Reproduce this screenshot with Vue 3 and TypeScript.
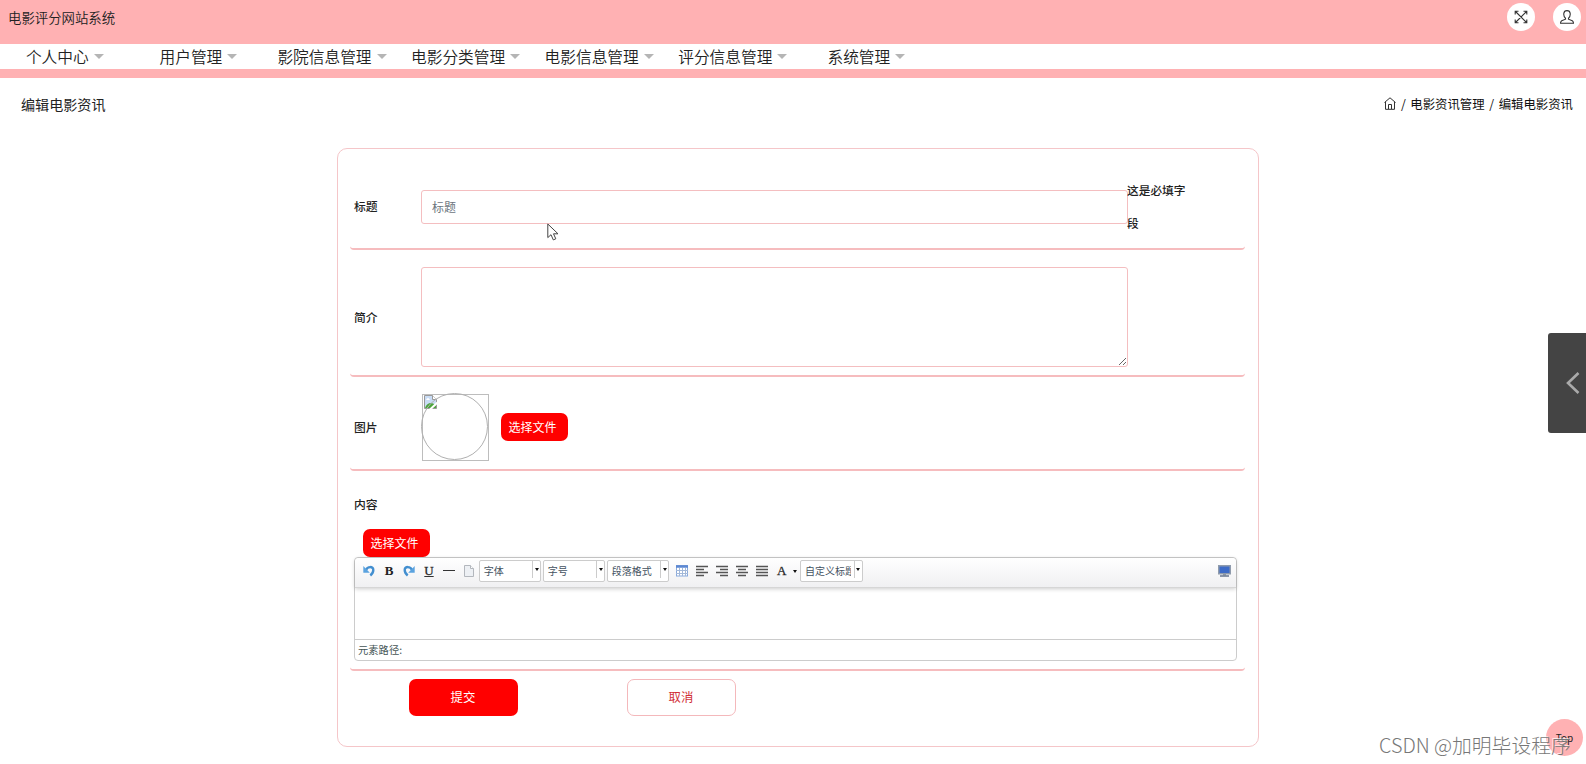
<script setup lang="ts">
interface Combo { label: string; }
const menus: string[] = ['个人中心', '用户管理', '影院信息管理', '电影分类管理', '电影信息管理', '评分信息管理', '系统管理']
const combos: Combo[] = [{ label: '字体' }, { label: '字号' }, { label: '段落格式' }]
const aligns: string[] = [
  'M0 1.5h12M0 4.5h8M0 7.5h12M0 10.5h8',
  'M0 1.5h12M4 4.5h8M0 7.5h12M4 10.5h8',
  'M0 1.5h12M2 4.5h8M0 7.5h12M2 10.5h8',
  'M0 1.5h12M0 4.5h12M0 7.5h12M0 10.5h12',
]
</script>

<template>
  <div class="page">
    <header class="header">
      <span class="brand">电影评分网站系统</span>
      <div class="tools">
        <button class="round">
          <svg width="14" height="14" viewBox="0 0 14 14"><path d="M1.5 1.5l11 11M12.5 1.5l-11 11M1.2 4.5V1.2h3.3M9.5 1.2h3.3v3.3M12.8 9.5v3.3H9.5M4.5 12.8H1.2V9.5" /></svg>
        </button>
        <button class="round">
          <svg width="14" height="14" viewBox="0 0 14 14"><path d="M5.5 8.2C3.9 7 3.6 5.4 3.8 3.5 4 1.6 5.200.6 7 .6s3 1 3.200 2.900C10.400 5.400 10.100 7 8.500 8.200v1L12.300 10.700q1 .5 1.200 2.500H.5q.2-2 1.200-2.500L5.500 9.200z" /></svg>
        </button>
      </div>
    </header>
    <nav class="nav">
      <a v-for="m in menus" :key="m" class="menu"><span>{{ m }}</span><i class="caret"></i></a>
    </nav>
    <div class="strip"></div>

    <div class="heading">
      <h1>编辑电影资讯</h1>
      <div class="crumbs">
        <svg width="12" height="13" viewBox="0 0 12 13"><path d="M.5 5.500L6 .8l5.500 4.700M1.500 5v7.300h9V5M4.500 12V7.500h3V12" /></svg>
        <span class="slash">/</span><span>电影资讯管理</span><span class="slash">/</span><span>编辑电影资讯</span>
      </div>
    </div>

    <main class="card">
      <section class="row row-title">
        <label>标题</label>
        <input class="field" type="text" placeholder="标题" />
        <span class="hint">这是必填字段</span>
      </section>
      <section class="row row-intro">
        <label>简介</label>
        <textarea class="field area"></textarea>
      </section>
      <section class="row row-image">
        <label>图片</label>
        <div class="preview">
          <svg width="68" height="68" viewBox="0 0 68 68">
            <rect x="1.500" y="1.500" width="66" height="66" fill="none" stroke="#bdbdbd" />
            <path d="M3.500 2.500h8l4 4v9h-12z" fill="#c9dcf5" stroke="#999" />
            <path d="M4 15c2-5 7-7 11-2v2z" fill="#4ca63c" />
            <path d="M5 7q2-4 4 0z" fill="#fff" />
            <path d="M11.500 2.500v4h4" fill="#fff" stroke="#999" />
            <path d="M9 16.500l7.500-7" stroke="#fff" stroke-width="2" />
            <circle cx="33.500" cy="33.500" r="33" fill="none" stroke="#b0b0b0" />
          </svg>
        </div>
        <button class="pick">选择文件</button>
      </section>
      <section class="row row-content">
        <label>内容</label>
        <button class="pick">选择文件</button>
        <div class="editor">
          <div class="toolbar">
            <div class="glyphs">
              <svg width="12" height="12" viewBox="0 0 12 12"><path d="M3 5C4.500 1.200 10.300 1 10.300 5c0 2.300-1 4-3 5.500" fill="none" stroke="#438fd0" stroke-width="2.400" /><path d="M.3 1v6.800h6.500z" fill="#5ba3df" /></svg>
              <b>B</b>
              <svg width="12" height="12" viewBox="0 0 12 12"><path d="M9 5C7.500 1.200 1.700 1 1.700 5c0 2.300 1 4 3 5.500" fill="none" stroke="#438fd0" stroke-width="2.400" /><path d="M11.700 1v6.800H5.200z" fill="#5ba3df" /></svg>
              <u>U</u>
              <svg width="12" height="12" viewBox="0 0 12 12"><path d="M0 5.500h12" stroke="#333" /></svg>
              <svg width="12" height="12" viewBox="0 0 12 12"><path d="M1.500.5h6l3 3v8h-9z" fill="#edf0f4" stroke="#b3b7bd" /><path d="M7.500.5v3h3" fill="#fff" stroke="#b3b7bd" /></svg>
            </div>
            <div v-for="c in combos" :key="c.label" class="combo"><span>{{ c.label }}</span><i><em></em></i></div>
            <div class="glyphs after">
              <svg width="12" height="12" viewBox="0 0 12 12"><rect x=".5" y=".5" width="11" height="10.500" fill="#fff" stroke="#88a9dc" /><path d="M0 1.500h12" stroke="#5b87d2" stroke-width="2.500" /><path d="M0 5.500h12M0 8.500h12M3.500 3v8M6.500 3v8M9.500 3v8" stroke="#a2b8d9" /></svg>
              <svg v-for="a in aligns" :key="a" width="12" height="12" viewBox="0 0 12 12"><path :d="a" stroke="#555" stroke-width="1.300" /></svg>
              <span class="fore">A</span>
            </div>
            <em class="tri"></em>
            <div class="combo"><span>自定义标题</span><i><em></em></i></div>
            <svg class="screen" width="13" height="12" viewBox="0 0 13 12"><rect x=".75" y=".75" width="11.500" height="8" fill="#3d6bc7" stroke="#8f9bac" stroke-width="1.500" /><path d="M5 9h3v1.500H5z" fill="#8b96a3" /><path d="M2 11h9" stroke="#66758c" stroke-width="1.500" /></svg>
          </div>
          <div class="canvas"></div>
          <div class="path">元素路径:</div>
        </div>
      </section>
      <div class="actions">
        <button class="submit">提交</button>
        <button class="cancel">取消</button>
      </div>
    </main>

    <aside class="drawer"><svg width="14" height="24" viewBox="0 0 14 24"><path d="M12.500 2L2 12l10.500 10" /></svg></aside>
    <div class="top">Top</div>
    <div class="mark">CSDN @加明毕设程序</div>
    <svg class="pointer" width="12" height="19" viewBox="0 0 12 19"><path d="M.8 1v13.600L4 11.700l2.300 5.200 2.500-1.100-2.300-5H11z" fill="#fff" stroke="#444" /></svg>
  </div>
</template>

<style>
body { background: #fff; }
</style>

<style scoped>
* { box-sizing: border-box; }
.page { position: relative; width: 1586px; height: 764px; overflow: hidden; font-family: "Noto Sans CJK SC", sans-serif; color: #333; font-size: 12px; }
button { font-family: inherit; margin: 0; padding: 0; border: 0; }
.header { height: 44px; background: #ffb1b3; display: flex; justify-content: space-between; padding: 2.5px 5px 0 8px; }
.brand { font-size: 13.4px; line-height: 29px; color: #222; font-weight: 350; }
.tools { display: flex; gap: 18px; }
.round { width: 28px; height: 28px; border-radius: 50%; background: #fff; display: flex; align-items: center; justify-content: center; }
.round svg { fill: none; stroke: #333; stroke-width: 1.1; }
.nav { display: flex; height: 25px; }
.menu { width: 133.6px; padding-right: 4px; display: flex; align-items: center; justify-content: center; gap: 5px; font-size: 15.7px; line-height: 25px; font-weight: 350; color: #222; white-space: nowrap; }
.caret { border: 5px solid transparent; border-top-color: #b5b5b5; border-bottom: 0; }
.strip { height: 9px; background: #ffb1b3; }
.heading { height: 69.5px; padding: 13px 13px 0 21px; display: flex; justify-content: space-between; }
h1 { margin: 0; font-size: 14.1px; line-height: 26px; font-weight: 400; color: #222; }
.crumbs { display: flex; align-items: center; height: 25px; font-size: 12.4px; color: #111; }
.crumbs svg { fill: none; stroke: #333; }
.slash { width: 14px; text-align: center; }
.card { margin-left: 337px; width: 922px; height: 599px; border: 1px solid #f5c6c9; border-radius: 10px; padding: 21px 13px 0 12px; }
.row { border-bottom: 2px solid #f6bcbe; border-radius: 4px; padding-left: 4px; display: flex; align-items: center; }
.row label { width: 67px; flex: none; font-weight: 500; font-size: 11.8px; color: #222; }
.row-title { height: 80.5px; }
.row-intro { height: 127px; padding-top: 8px; }
.row-image { height: 93.500px; padding-top: 8px; }
.row-content { height: 200px; display: block; padding: 24.5px 8px 0 4px; }
.row-content label { display: block; height: 33.5px; line-height: 18px; }
.field { width: 707px; flex: none; border: 1px solid #f4bec0; border-radius: 3px; background: #fff; font-family: inherit; font-size: 12px; outline: none; }
input.field { height: 34px; padding: 0 10px; margin-top: -4px; }
.row-title label { margin-top: -6px; }
.field::placeholder { color: #6c757d; opacity: 1; }
.area { height: 100px; resize: both; }
.hint { width: 61px; line-height: 33px; font-weight: 500; font-size: 11.7px; color: #222; margin: -6px 0 0 -1px; }
.preview { width: 68px; height: 68px; }
.pick { width: 67px; height: 28.5px; border-radius: 7px; background: #f00; color: #fff; font-size: 12px; line-height: 27px; display: block; padding-right: 3px; }
.row-image .pick { margin-left: 11.500px; }
.row-content .pick { margin-left: 8.500px; }
.editor { width: 883px; height: 104px; border: 1px solid #ccc; border-radius: 4px; }
.toolbar { height: 29.500px; display: flex; align-items: center; padding: 0 5px 2px 8px; border-bottom: 1px solid #d6d6d6; border-radius: 4px 4px 0 0; background: linear-gradient(#fff, #f0f0f2); box-shadow: 0 1px 4px rgba(0,0,0,.2); }
.glyphs { display: flex; align-items: center; gap: 8px; margin-right: 3.800px; font-family: "Liberation Serif", serif; font-size: 13px; color: #222; line-height: 14px; }
.glyphs svg { flex: none; }
.glyphs b, .glyphs u, .fore { width: 12px; text-align: center; }
.glyphs u { font-weight: 400; -webkit-text-stroke: .3px #333; }
.fore { -webkit-text-stroke: .3px #333; }
.combo { width: 62.500px; height: 22px; margin-right: 1.5px; border: 1px solid #ccc; border-radius: 2px; background: #fff; display: flex; font-size: 10px; line-height: 19px; color: #44525f; }
.combo span { width: 53px; padding-left: 4px; overflow: hidden; white-space: nowrap; border-right: 3px solid transparent; }
.combo i { width: 8px; height: 17px; border-left: 1px solid #ccc; display: flex; align-items: center; justify-content: center; }
.combo em, .tri { flex: none; border: 2.5px solid transparent; border-top: 3px solid #111; border-bottom: 0; }
.after { margin: 0 0 0 4.800px; }
.tri { margin: 0 3px 0 5.500px; }
.screen { margin-left: auto; }
.canvas { height: 51.500px; }
.path { border-top: 1px solid #ccc; font-size: 10.3px; line-height: 20px; padding-left: 3px; color: #455; }
.actions { display: flex; gap: 109px; padding: 8px 0 0 58.500px; }
.submit, .cancel { width: 109px; height: 37px; border-radius: 7px; font-size: 12.4px; line-height: 37px; }
.submit { background: #f00; color: #fff; }
.cancel { background: #fff; color: #d12f37; border: 1px solid #f4b8bb; line-height: 35px; }
.drawer { position: absolute; right: 0; top: 333px; width: 38px; height: 100px; border-radius: 3px 0 0 3px; background: #444; display: flex; align-items: center; padding-left: 18px; }
.drawer svg { fill: none; stroke: #aaa; stroke-width: 2.6; }
.top { position: absolute; left: 1546px; top: 719px; width: 37px; height: 37px; border-radius: 50%; background: #ffb1b3; text-align: center; line-height: 38px; font-size: 10px; color: #222; }
.mark { position: absolute; left: 1379px; top: 729px; white-space: nowrap; font-size: 19.8px; line-height: 32px; font-weight: 300; color: #777; font-family: "Noto Sans CJK SC", sans-serif; text-shadow: -1px -1px 0 rgba(255,255,255,.7); }
.pointer { position: absolute; left: 546.500px; top: 222.500px; }
</style>
